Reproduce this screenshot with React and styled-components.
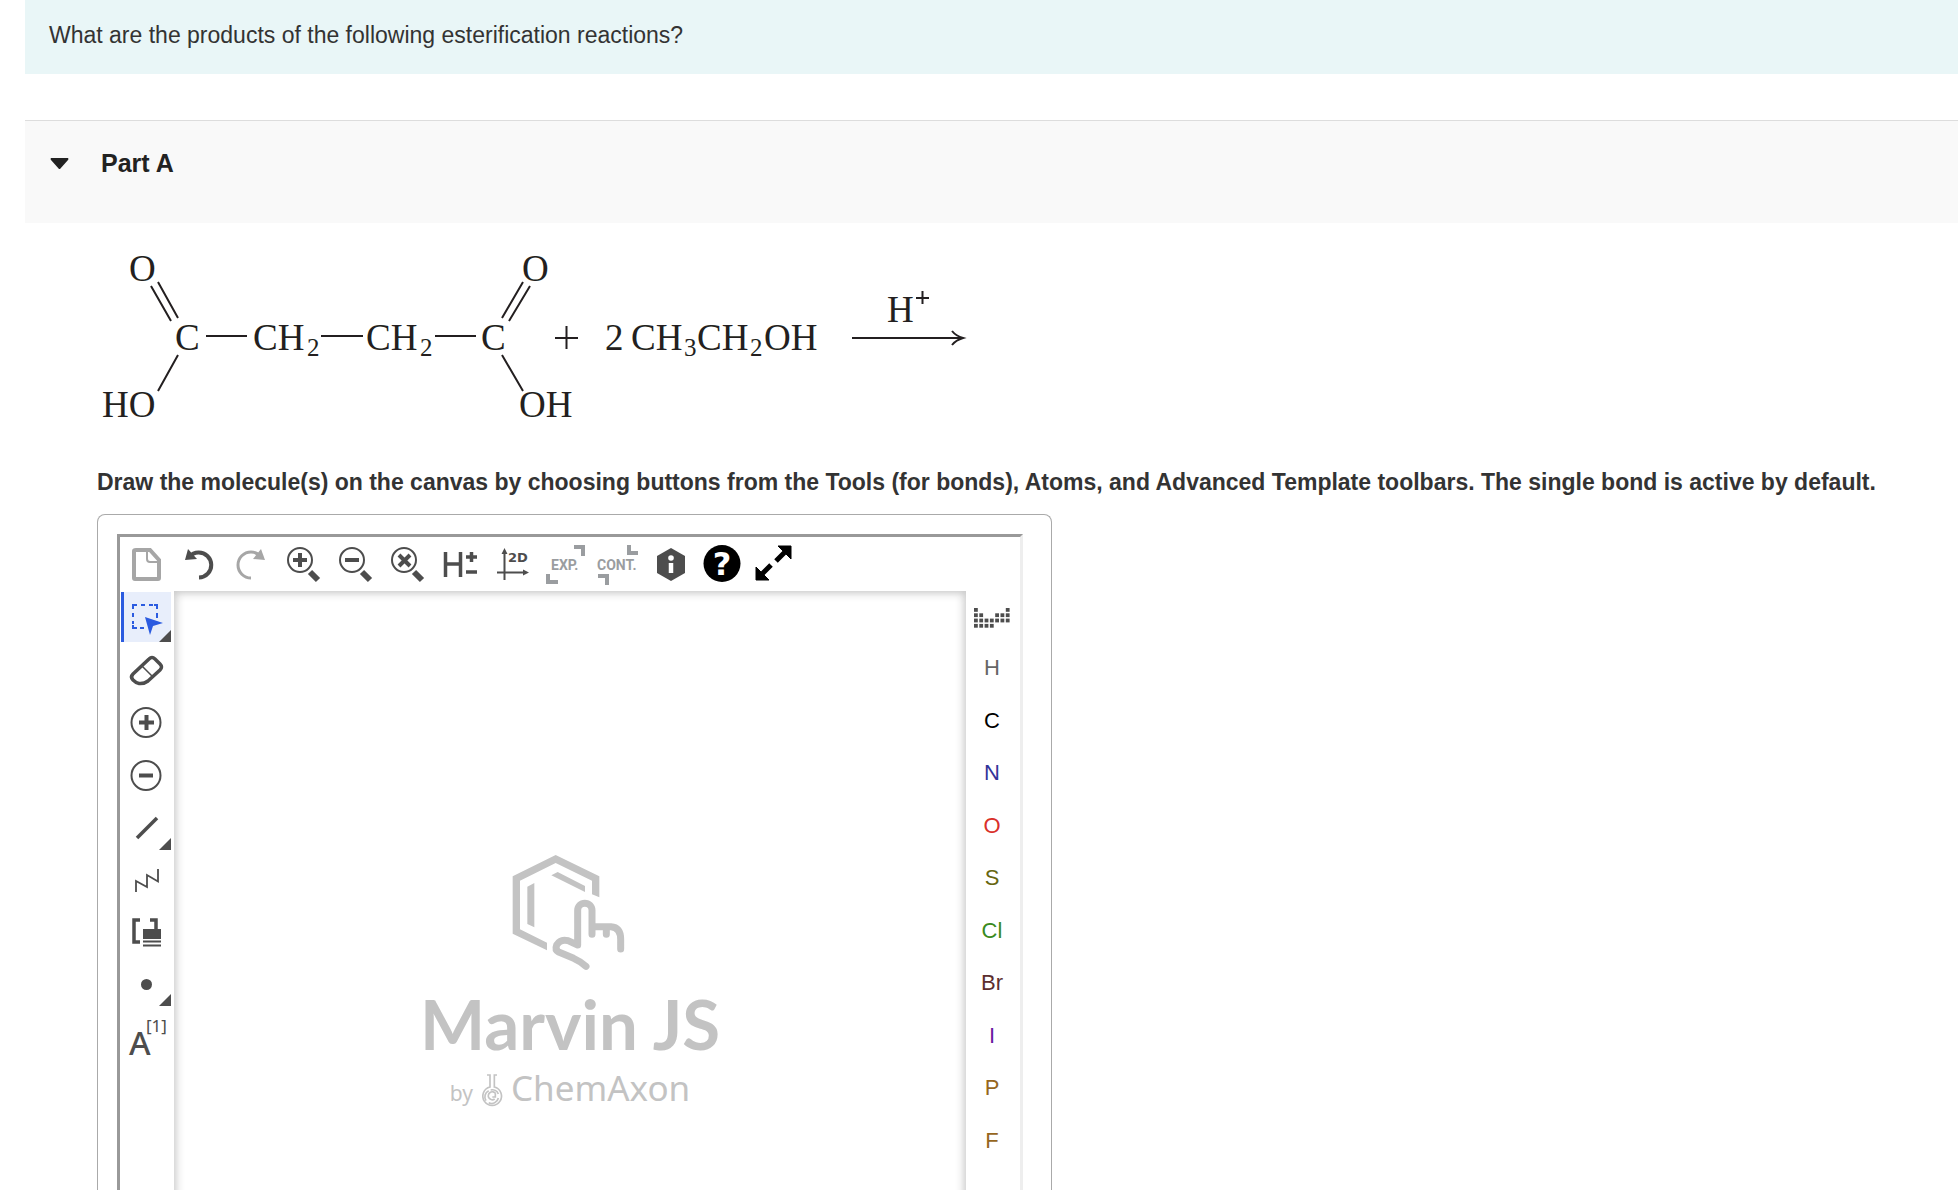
import React from 'react';
import styled, {createGlobalStyle} from 'styled-components';

const GlobalStyle = createGlobalStyle`
    * {
        box-sizing: border-box;
    }
    body {
        margin: 0;
        background: #fff;
        color: #333;
        font-family: 'Liberation Sans', Arial, sans-serif;
    }
    button {
        padding: 0;
        border: 0;
        background: none;
        color: inherit;
        font-family: inherit;
        cursor: pointer;
    }
    svg {
        display: block;
        overflow: visible;
    }
`;

const Page = styled.main`
    display: flex;
    flex-direction: column;
    height: 100vh;
    padding-left: 25px;
    overflow: hidden;
`;

const Question = styled.p`
    flex: none;
    margin: 0 0 46px;
    padding: 20px 24px 24px;
    background: #e9f6f7;
    font-size: 23px;
    line-height: 30px;
`;

const PartHeader = styled.header`
    flex: none;
    height: 103px;
    padding: 27px 25px;
    border-top: 1px solid #ddd;
    background: #f9f9f9;
    color: #222;
`;

const PartTitle = styled.h2`
    margin: 0;
    font-size: 25px;
    line-height: 30px;
`;

const PartToggle = styled.button`
    display: flex;
    align-items: center;
    gap: 32px;
    font-size: inherit;
    font-weight: bold;
    line-height: inherit;
`;

const PartBody = styled.section`
    flex: 1;
    display: flex;
    flex-direction: column;
    min-height: 0;
    padding: 17px 24px 0 72px;
`;

const Reaction = styled.svg`
    flex: none;
    width: 880px;
    height: 190px;
    margin-bottom: 37px;
    fill: #231f20;
    font-family: 'Liberation Serif', 'Times New Roman', serif;
    font-size: 37px;

    path {
        fill: none;
        stroke: #231f20;
        stroke-width: 2;
    }
    .small {
        font-size: 25px;
    }
`;

const Instruction = styled.p`
    flex: none;
    margin: 0 0 17px;
    font-size: 23px;
    font-weight: bold;
    line-height: 30px;
    white-space: nowrap;
`;

const EditorBox = styled.div`
    flex: 1;
    display: flex;
    max-width: 955px;
    min-height: 0;
    padding: 19px 28px 0 19px;
    border: 1px solid #aaa;
    border-bottom: 0;
    border-radius: 8px 8px 0 0;
`;

const Editor = styled.div`
    flex: 1;
    display: grid;
    grid-template-columns: 54px 1fr 54px;
    grid-template-rows: 54px 1fr;
    border: 3px solid #999;
    border-right-color: #eee;
    border-bottom: 0;
`;

const Toolbar = styled.div`
    grid-column: 1 / -1;
    display: flex;
    padding-left: 1px;
`;

const ToolbarButton = styled.button`
    width: 52px;
    height: 54px;
    color: ${({$muted}) => $muted ? '#a6a6a6' : '#4d4d4d'};
`;

const ToolRail = styled.div`
    display: flex;
    flex-direction: column;
    gap: 2px;
    padding: 1px;
`;

const ToolButton = styled.button`
    flex: none;
    width: 50px;
    height: 50px;
    color: ${({$active}) => $active ? '#2b5be0' : '#4d4d4d'};
    background: ${({$active}) => $active ? '#e8eefb' : 'none'};
    box-shadow: ${({$active}) => $active ? 'inset 3px 0 #2b5be0' : 'none'};
`;

const Canvas = styled.div`
    display: flex;
    flex-direction: column;
    align-items: center;
    min-width: 0;
    margin-bottom: -20px;
    padding-top: 264px;
    overflow: hidden;
    box-shadow: inset 0 6px 10px -4px #ccc, inset 6px 0 10px -4px #ccc, inset -6px 0 10px -4px #ccc;
    color: #c3c3c3;
`;

const BrandName = styled.div`
    margin-top: 14px;
    font-family: Lato, 'Noto Sans', sans-serif;
    font-size: 69px;
    font-weight: bold;
    line-height: 80px;
    white-space: nowrap;
`;

const BrandOwner = styled.div`
    display: flex;
    align-items: baseline;
    gap: 8px;
    font-family: 'Noto Sans', sans-serif;
    font-size: 35px;
    line-height: 48px;

    small {
        font-size: 21px;
    }
    svg {
        align-self: center;
    }
`;

const AtomRail = styled.div`
    display: grid;
    grid-template-rows: 50px;
    grid-auto-rows: 52px 53px;
    align-content: start;
    padding: 1px 2px 0 0;
`;

const AtomButton = styled.button`
    display: flex;
    align-items: center;
    justify-content: center;
    color: ${({$color}) => $color};
    font-size: 22px;
`;

const Magnifier = ({children}) => (
    <g fill="none" stroke="currentColor">
        <circle cx="23" cy="23" r="12" strokeWidth="2"/>
        <path d="M33 35l8 8" strokeWidth="6"/>
        <path d={children} strokeWidth="4"/>
    </g>
);

const Corner = () => <path d="M50 38v12H38z" fill="#4d4d4d"/>;

const toolbarItems = [
    {
        label: 'New document', muted: true,
        icon: (
            <g fill="none" stroke="currentColor">
                <path d="M15 13H29L38 23V41Q38 42 37 42H14Q13 42 13 41V14Q13 13 15 13z" strokeWidth="4"/>
                <path d="M26 14V22Q26 25 29 25H38" strokeWidth="2"/>
            </g>
        ),
    },
    {
        label: 'Undo',
        icon: (
            <g>
                <path d="M16 20Q20 15.500 25.500 15.500A12.500 12.500 0 0 1 26 40.500" fill="none" stroke="currentColor" strokeWidth="4"/>
                <path d="M12 23l3-11 9 10z" fill="currentColor"/>
            </g>
        ),
    },
    {
        label: 'Redo', muted: true,
        icon: (
            <g>
                <path d="M36 20Q32 15 26 15A13 13 0 0 0 26 41" fill="none" stroke="currentColor" strokeWidth="3"/>
                <path d="M40 23l-4-11-8 10z" fill="currentColor"/>
            </g>
        ),
    },
    {label: 'Zoom in', icon: <Magnifier>M16 23h14M23 16v14</Magnifier>},
    {label: 'Zoom out', icon: <Magnifier>M16 23h14</Magnifier>},
    {label: 'Zoom to fit', icon: <Magnifier>M18 18l11 11M29 18l-11 11</Magnifier>},
    {
        label: 'Explicit hydrogens',
        icon: (
            <g>
                <path d="M12.500 15v25M27.500 15v25M12.500 27h15" fill="none" stroke="currentColor" strokeWidth="3.500"/>
                <path d="M33 20h11M38.500 15v10M33 35h11" fill="none" stroke="currentColor" strokeWidth="3.500"/>
            </g>
        ),
    },
    {
        label: 'Clean in 2D',
        icon: (
            <g fill="currentColor">
                <path d="M19.500 15v28M12 35.500h28" stroke="currentColor" strokeWidth="2"/>
                <path d="M19.500 11l3 6h-6zM44 35.500l-6 3v-6z"/>
                <text x="23" y="25" fontFamily="DejaVu Sans, sans-serif" fontSize="13" fontWeight="bold">2D</text>
            </g>
        ),
    },
    {
        label: 'Expand', muted: true,
        icon: (
            <g fill="#9a9da0">
                <path d="M37 10h9v9M11 37v8h10" fill="none" stroke="#9a9da0" strokeWidth="4"/>
                <text x="14" y="33" fontFamily="Liberation Sans Narrow, Roboto, sans-serif" fontSize="14" fontWeight="bold">EXP.</text>
            </g>
        ),
    },
    {
        label: 'Contract', muted: true,
        icon: (
            <g fill="#9a9da0">
                <path d="M40 8v8h9M9 39h9v9" fill="none" stroke="#9a9da0" strokeWidth="4"/>
                <text x="8" y="33" fontFamily="Liberation Sans Narrow, Roboto, sans-serif" fontSize="14" fontWeight="bold">CONT.</text>
            </g>
        ),
    },
    {
        label: 'About',
        icon: (
            <g>
                <path d="M30 11l14 8v17l-14 8-14-8V19z" fill="currentColor"/>
                <circle cx="30" cy="21" r="2.800" fill="#fff"/>
                <path d="M30 26v10" stroke="#fff" strokeWidth="4.500"/>
            </g>
        ),
    },
    {
        label: 'Help',
        icon: (
            <g>
                <circle cx="29" cy="26.500" r="18.500" fill="#000"/>
                <text x="29" y="38" textAnchor="middle" fill="#fff" fontFamily="DejaVu Sans, sans-serif" fontSize="32" fontWeight="bold">?</text>
            </g>
        ),
    },
    {
        label: 'Full screen',
        icon: (
            <g fill="#000">
                <path d="M33 9h13v13zM11 30v13h13z" stroke="#000" strokeLinejoin="round"/>
                <path d="M31 24l10-10M26 28L16 38" stroke="#000" strokeWidth="5"/>
            </g>
        ),
    },
];

const tools = [
    {
        label: 'Rectangle selection', active: true,
        icon: (
            <g>
                <path d="M12 17v-4h4M20 13h4M28 13h4M33 13h3v4M36 21v5M12 21v4M12 29v3M12 33v3h4M19 36h4" fill="none" stroke="currentColor" strokeWidth="2"/>
                <path d="M24 25l18 6-10 3-3 9z" fill="currentColor"/>
                <Corner/>
            </g>
        ),
    },
    {
        label: 'Erase',
        icon: (
            <g fill="none" stroke="currentColor">
                <path d="M28 15Q31 12 34 15L39 20Q42 23 39 26L27 37Q23 40 18 39.500Q15 39 12 36Q9 33 12 30z" strokeWidth="3.500"/>
                <path d="M21 22l11 11" strokeWidth="1.500"/>
            </g>
        ),
    },
    {
        label: 'Increase charge',
        icon: (
            <g fill="none" stroke="currentColor">
                <circle cx="25" cy="26.500" r="14.500" strokeWidth="2"/>
                <path d="M18 26.500h15M25.500 19v15" strokeWidth="4"/>
            </g>
        ),
    },
    {
        label: 'Decrease charge',
        icon: (
            <g fill="none" stroke="currentColor">
                <circle cx="25" cy="27.500" r="14.500" strokeWidth="2"/>
                <path d="M18 27.500h14" strokeWidth="4"/>
            </g>
        ),
    },
    {
        label: 'Single bond',
        icon: (
            <g>
                <path d="M16 38l20-20" stroke="currentColor" strokeWidth="3.500"/>
                <Corner/>
            </g>
        ),
    },
    {
        label: 'Chain',
        icon: <path d="M15 40V29l11 6V23l11 6.500V17" fill="none" stroke="currentColor" strokeWidth="1.800"/>,
    },
    {
        label: 'Group',
        icon: (
            <g fill="none" stroke="currentColor">
                <path d="M19 16h-6v22h6M29 16h6v10" strokeWidth="3.500"/>
                <path d="M22 30h18" strokeWidth="10"/>
                <path d="M22 37.500h18M22 41.500h18" strokeWidth="1.800"/>
            </g>
        ),
    },
    {
        label: 'Radical',
        icon: (
            <g>
                <circle cx="25.500" cy="28.500" r="5.500" fill="currentColor"/>
                <Corner/>
            </g>
        ),
    },
    {
        label: 'Atom map',
        icon: (
            <g fill="currentColor" fontFamily="Noto Sans, sans-serif">
                <text x="8" y="47" fontSize="33" fontWeight="500">A</text>
                <text x="25" y="24" fontSize="17">[1]</text>
            </g>
        ),
    },
];

const atoms = [
    ['H', '#666'],
    ['C', '#000'],
    ['N', '#339'],
    ['O', '#d9302a'],
    ['S', '#661'],
    ['Cl', '#3a8a20'],
    ['Br', '#5c2e2e'],
    ['I', '#6a1aa0'],
    ['P', '#96661e'],
    ['F', '#96661e'],
];

const tableRows = ['#.....#', '##..###', '#######', '####...'];

const PeriodicTable = () => (
    <svg width="36" height="20" fill="#4d4d4d">
        {tableRows.map((row, y) => row.split('').map((cell, x) => (
            cell === '#' && <rect key={`${x}-${y}`} x={x * 5.3} y={y * 5.3 + 1} width="3.800" height="3.800"/>
        )))}
    </svg>
);

const ReactionScheme = () => (
    <Reaction viewBox="97 240 880 190">
        <text x="129" y="281">O</text>
        <text x="175" y="350">C</text>
        <text x="102" y="417">HO</text>
        <text x="253" y="350">CH</text>
        <text x="307" y="356" className="small">2</text>
        <text x="366" y="350">CH</text>
        <text x="420" y="356" className="small">2</text>
        <text x="481" y="350">C</text>
        <text x="522" y="281">O</text>
        <text x="519" y="417">OH</text>
        <text x="605" y="350">2</text>
        <text x="631" y="350">CH</text>
        <text x="684" y="356" className="small">3</text>
        <text x="697" y="350">CH</text>
        <text x="750" y="356" className="small">2</text>
        <text x="764" y="350">OH</text>
        <text x="887" y="322">H</text>
        <path d="M206 336h41M321 336h42M435 336h41"/>
        <path d="M151 286l20 35M158 282l20 36M178 355l-20 36"/>
        <path d="M523 282l-21 36M530 286l-21 35M502 355l21 36"/>
        <path d="M555 338h23M566.500 326v23M916 298h13M922.500 291v13"/>
        <path d="M852 338h110M952 331q4 5 11 7q-7 2-11 7"/>
    </Reaction>
);

const MarvinLogo = () => (
    <svg width="115" height="115" viewBox="338 47 345 345" fill="currentColor">
        <path d="M440 333L337 283V111L466 47L597 111V174L575 165V124L466 71L359 124V270L440 310z"/>
        <path d="M381 142l21-11v133l-21-10zM453 108l19-10 82 42v18z"/>
        <path
            d="M575 285V213a21.500 21.500 0 0 0-43 0V317L503 304Q480 298 469 317Q463 332 475 338L520 357Q540 366 557 381M575 262H632Q661 264 661 300V329M618 262V285"
            fill="none"
            stroke="currentColor"
            strokeWidth="21"
            strokeLinecap="round"
            strokeLinejoin="round"
        />
    </svg>
);

const FlaskLogo = () => (
    <svg width="22" height="33" viewBox="240 693 64 99" fill="none" stroke="currentColor" strokeWidth="5">
        <path d="M257 696h9v36a28 28 0 1 0 13 0v-36h8"/>
        <path d="M254 773a21 21 0 0 1 8-30M268 741a20 20 0 0 1 23 12M291 765a20 20 0 0 1-29 14"/>
        <path d="M283 752a12 12 0 1 0-3 16M282 752v10h-9"/>
    </svg>
);

const App = () => {
    return (
        <Page>
            <GlobalStyle/>
            <Question>What are the products of the following esterification reactions?</Question>
            <PartHeader>
                <PartTitle>
                    <PartToggle aria-expanded="true">
                        <svg width="19" height="11" viewBox="0 0 19 11" fill="#222">
                            <path d="M1 0H18Q19 1 18 2L10 11H9L1 2Q0 1 1 0z"/>
                        </svg>
                        Part A
                    </PartToggle>
                </PartTitle>
            </PartHeader>
            <PartBody>
                <ReactionScheme/>
                <Instruction>
                    Draw the molecule(s) on the canvas by choosing buttons from the Tools (for bonds), Atoms, and Advanced Template toolbars. The single bond is active by default.
                </Instruction>
                <EditorBox>
                    <Editor>
                        <Toolbar>
                            {toolbarItems.map(({label, muted, icon}) => (
                                <ToolbarButton key={label} aria-label={label} $muted={muted}>
                                    <svg width="52" height="54">{icon}</svg>
                                </ToolbarButton>
                            ))}
                        </Toolbar>
                        <ToolRail>
                            {tools.map(({label, active, icon}) => (
                                <ToolButton key={label} aria-label={label} $active={active}>
                                    <svg width="50" height="50">{icon}</svg>
                                </ToolButton>
                            ))}
                        </ToolRail>
                        <Canvas>
                            <MarvinLogo/>
                            <BrandName>Marvin JS</BrandName>
                            <BrandOwner>
                                <small>by</small>
                                <FlaskLogo/>
                                ChemAxon
                            </BrandOwner>
                        </Canvas>
                        <AtomRail>
                            <AtomButton aria-label="Periodic table">
                                <PeriodicTable/>
                            </AtomButton>
                            {atoms.map(([symbol, color]) => (
                                <AtomButton key={symbol} $color={color}>{symbol}</AtomButton>
                            ))}
                        </AtomRail>
                    </Editor>
                </EditorBox>
            </PartBody>
        </Page>
    );
};

export default App;
